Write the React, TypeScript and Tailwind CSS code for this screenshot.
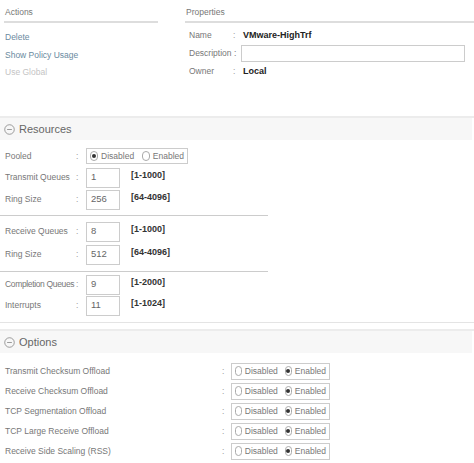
import React from 'react';

const font = { fontFamily: '"Liberation Sans", Arial, sans-serif' };

const Radio = ({ on }: { on: boolean }) => (
  <span className="inline-flex w-[10px] h-[10px] rounded-full border border-[#aaa] bg-white items-center justify-center">
    {on && <span className="w-[4px] h-[4px] rounded-full bg-[#333]" />}
  </span>
);

const RadioGroup = ({ enabled, className }: { enabled: boolean; className: string }) => (
  <div className={`flex items-center gap-[3px] border border-[#ccc] bg-white px-[3px] text-[8.5px] text-[#777] ${className}`}>
    <Radio on={!enabled} />
    <span>Disabled</span>
    <span className="w-[2px]" />
    <Radio on={enabled} />
    <span>Enabled</span>
  </div>
);

const MinusCircle = () => (
  <svg width="11" height="11" viewBox="0 0 12 12" className="shrink-0">
    <circle cx="6" cy="6" r="5.2" fill="none" stroke="#888" strokeWidth="0.9" />
    <line x1="3.4" y1="6" x2="8.6" y2="6" stroke="#888" strokeWidth="0.9" />
  </svg>
);

const SectionHeader = ({ title }: { title: string }) => (
  <div className="flex items-center gap-[4px] h-[22px] bg-[#f7f7f7] pl-[4px] mr-[2px] text-[11px] text-[#666]">
    <MinusCircle />
    <span>{title}</span>
  </div>
);

const NumRow = ({ label, value, range, tight }: { label: string; value: string; range: string; tight?: boolean }) => (
  <div className="flex items-center h-[21px] text-[8.5px] text-[#777]">
    <span className={`w-[76px] pl-[5px] shrink-0 whitespace-nowrap ${tight ? 'tracking-[-0.35px]' : ''}`}>{label}</span>
    <span className="w-[10px] shrink-0 text-[#999]">:</span>
    <div className="w-[34px] h-[20px] border border-[#ccc] bg-white flex items-center pl-[4px] text-[9.5px] text-[#666] shrink-0">
      {value}
    </div>
    <span className="ml-[11px] -mt-[3px] font-bold text-[9px] text-[#333]">{range}</span>
  </div>
);

const options = [
  'Transmit Checksum Offload',
  'Receive Checksum Offload',
  'TCP Segmentation Offload',
  'TCP Large Receive Offload',
  'Receive Side Scaling (RSS)',
];

export default function App() {
  return (
    <div className="w-[474px] h-[463px] bg-white overflow-hidden" style={font}>
      {/* top: actions + properties */}
      <div className="flex h-[116px] pt-[6px]">
        <div className="w-[158px] pl-[4px] shrink-0">
          <div className="h-[17px] pl-[1px] text-[8.5px] text-[#777] border-b-2 border-[#ddd]">Actions</div>
          <div className="flex flex-col pl-[1px] pt-[8px] gap-[5.5px] text-[8.5px] leading-[12px]">
            <span className="text-[#6a8aa0]">Delete</span>
            <span className="text-[#6a8aa0]">Show Policy Usage</span>
            <span className="text-[#c4c4c4]">Use Global</span>
          </div>
        </div>
        <div className="flex-1 ml-[27px]">
          <div className="h-[17px] pl-[1px] text-[8.5px] text-[#777] border-b-2 border-[#ddd]">Properties</div>
          <div className="flex flex-col pt-[4px] pl-[4px] text-[8.5px] text-[#777]">
            <div className="flex items-center h-[17px]">
              <span className="w-[44px]">Name</span>
              <span className="w-[10px] text-[#999]">:</span>
              <span className="font-bold text-[#222] text-[9px]">VMware-HighTrf</span>
            </div>
            <div className="flex items-center h-[19px]">
              <span className="w-[52px] whitespace-nowrap">Description :</span>
              <div className="w-[224px] h-[17px] border border-[#ccc] bg-white" />
            </div>
            <div className="flex items-center h-[17px]">
              <span className="w-[44px]">Owner</span>
              <span className="w-[10px] text-[#999]">:</span>
              <span className="font-bold text-[#222] text-[9px]">Local</span>
            </div>
          </div>
        </div>
      </div>

      {/* resources */}
      <div className="border-t-2 border-[#ececec]">
        <SectionHeader title="Resources" />
        <div className="pt-[5px]">
          <div className="flex items-center h-[22px] text-[8.5px] text-[#777]">
            <span className="w-[76px] pl-[5px] shrink-0">Pooled</span>
            <span className="w-[10px] shrink-0 text-[#999]">:</span>
            <RadioGroup enabled={false} className="w-[102px] h-[16px]" />
          </div>
          <NumRow label="Transmit Queues" value="1" range="[1-1000]" />
          <div className="h-[1px]" />
          <NumRow label="Ring Size" value="256" range="[64-4096]" />
          <div className="w-[268px] border-t border-[#ccc] mt-[5px] mb-[5px]" />
          <NumRow label="Receive Queues" value="8" range="[1-1000]" />
          <div className="h-[2px]" />
          <NumRow label="Ring Size" value="512" range="[64-4096]" />
          <div className="w-[268px] border-t border-[#ccc] mt-[6px] mb-[2px]" />
          <NumRow label="Completion Queues" value="9" range="[1-2000]" tight />
          <NumRow label="Interrupts" value="11" range="[1-1024]" />
        </div>
      </div>

      {/* options */}
      <div className="mt-[6px] border-t border-[#e4e4e4] pt-[6px]">
        <div className="border-t-2 border-[#ececec]">
          <SectionHeader title="Options" />
        </div>
        <div className="pt-[8px] flex flex-col">
          {options.map((o) => (
            <div key={o} className="flex items-center h-[20px] text-[8.5px] text-[#777]">
              <span className="w-[222px] pl-[5px] shrink-0">{o}</span>
              <span className="w-[9px] shrink-0 text-[#999]">:</span>
              <RadioGroup enabled className="w-[99px] h-[17px]" />
            </div>
          ))}
        </div>
      </div>
    </div>
  );
}
